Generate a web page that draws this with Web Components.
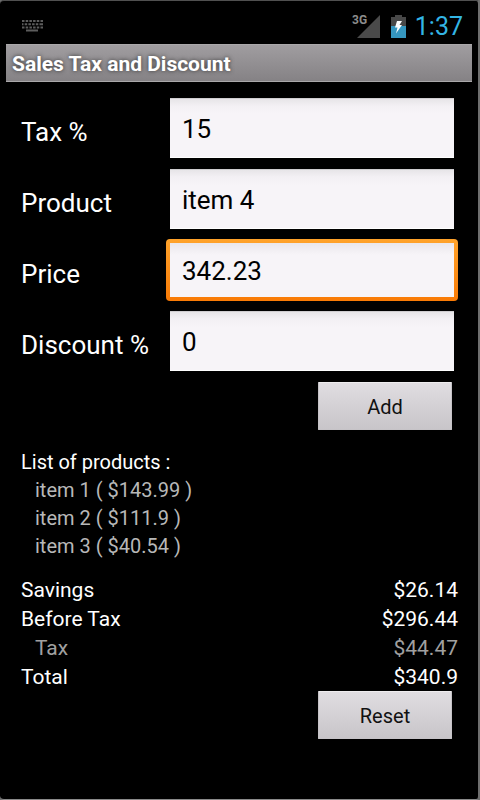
<!DOCTYPE html>
<html lang="en">
<head>
<meta charset="utf-8">
<meta name="viewport" content="width=device-width, initial-scale=1">
<title>Sales Tax and Discount</title>
<style>
  body { margin: 0; background: #6e6e6e; font-family: Roboto, "Liberation Sans", sans-serif; color: #fff; }
</style>
</head>
<body>
<tax-screen></tax-screen>
<script>
const define = (name, markup, setup) => {
  const template = document.createElement('template');
  template.innerHTML = markup;
  customElements.define(name, class extends HTMLElement {
    constructor() {
      super();
      this.attachShadow({ mode: 'open' }).append(template.content.cloneNode(true));
    }
    connectedCallback() { if (setup) setup(this, this.shadowRoot); }
  });
};

define('status-bar', `
  <style>
    :host { display: flex; align-items: center; height: 41px; padding: 0 15px 0 22px; box-sizing: border-box; }
    svg { display: block; flex: none; }
    .signal { margin-left: auto; }
    .battery { margin: 0 9px 0 11px; }
    time { font-size: 25px; line-height: 32px; font-weight: 400; color: #33b5e5; padding-top: 8px; }
    .signal, .battery, .keyboard { margin-top: 6px; }
    text { font: 700 12px Roboto, sans-serif; fill: #8c8c8c; }
  </style>
  <svg class="keyboard" width="21" height="12" viewBox="0 0 21 12" stroke="#5c5c5c" stroke-width="2" fill="none" role="img" aria-label="Keyboard">
    <path d="M0 1H21M0 7.500H21" stroke-dasharray="2.500 1.200"/>
    <path d="M0 4.300H21" stroke-dasharray="1.500 1.200 2.500 1.200 2.500 1.200 2.500 1.200 2.500 1.200 4 1"/>
    <path d="M4 10.500H16"/>
  </svg>
  <svg class="signal" width="29" height="24" viewBox="0 0 29 24" role="img" aria-label="Signal 3G">
    <path d="M29 1V24H6Z" fill="#4a4a4a"/>
    <text x="1" y="10">3G</text>
  </svg>
  <svg class="battery" width="15" height="24" viewBox="0 0 15 24" role="img" aria-label="Battery charging">
    <path d="M0 3H4V1H11V3H15V12H0Z" fill="#484848"/>
    <path d="M0 12H15V24H0Z" fill="#3596bf"/>
    <path d="M6 7H11L8.500 11H11L5 19.500L6.500 13.500H4Z" fill="#fff"/>
  </svg>
  <time>1:37</time>
`);

define('title-bar', `
  <style>
    :host { display: block; padding: 0 6px; margin: 1px 6px 0 6px; height: 38px; box-sizing: border-box;
      background: linear-gradient(#a09da0, #858285); border-top: 1px solid #aaa8aa; border-bottom: 1px solid #aaa8aa; }
    h1 { margin: 0; font-size: 21px; line-height: 38px; font-weight: 700; text-shadow: 0 0 4px #333; }
  </style>
  <h1><slot></slot></h1>
`);

define('form-field', `
  <style>
    :host { display: grid; grid-template: 60px / 149px minmax(0, 1fr); align-items: center; }
    label { font-size: 26px; line-height: 32px; padding-top: 8px; white-space: nowrap; }
    input { box-sizing: border-box; width: 100%; height: 60px; margin: 0; padding: 2px 12px 0; border: 0; border-radius: 0;
      font: 26px/32px Roboto, "Liberation Sans", sans-serif; color: #000; outline: none;
      background: linear-gradient(#e5e3e6, #f3f0f4 8px, #f7f4f8 16px, #f7f4f8);
      box-shadow: inset 0 1px #cfcdd0, inset 0 -1px #fff; }
    :host([active]) input { width: calc(100% + 8px); height: 62px; margin: 0 -4px; border: 4px solid transparent;
      border-radius: 4px; box-shadow: none;
      background: linear-gradient(#eae7eb, #f7f4f8 12px) padding-box, linear-gradient(#ffa32b, #f97a05) border-box; }
  </style>
  <label for="value"></label>
  <input id="value" type="text" autocomplete="off">
`, (host, root) => {
  root.querySelector('label').textContent = host.getAttribute('label');
  root.querySelector('input').value = host.getAttribute('value');
});

define('push-button', `
  <style>
    :host { display: flex; justify-content: flex-end; }
    button { width: 134px; height: 48px; padding: 2px 0 0; border: 1px solid #c6c3c7; border-top-color: #eeecee; border-radius: 1px;
      font: 20px/24px Roboto, "Liberation Sans", sans-serif; color: #111;
      background: linear-gradient(#e0dde1, #c8c5c9); }
  </style>
  <button type="button"><slot></slot></button>
`);

define('product-list', `
  <style>
    :host { display: block; font-size: 20px; line-height: 28px; }
    h2 { margin: 0; font: inherit; }
    ul { margin: 0; padding: 0 0 0 14px; list-style: none; color: #b8b8b8; }
  </style>
  <h2>List of products :</h2>
  <ul><li>item 1 ( $143.99 )</li><li>item 2 ( $111.9 )</li><li>item 3 ( $40.54 )</li></ul>
`);

define('total-row', `
  <style>
    :host { display: flex; justify-content: space-between; font-size: 21px; line-height: 28px; }
    :host([minor]) { color: #a0a0a0; padding-left: 14px; }
  </style>
  <span><slot></slot></span><span><slot name="amount"></slot></span>
`);

define('tax-screen', `
  <style>
    :host { display: block; box-sizing: border-box; min-height: 100vh; padding: 1px 0; border-right: 2px solid #6e6e6e;
      background: #000; border-top: 1px solid #505050; border-bottom: 1px solid #8a8a8a;
      border-radius: 4px; }
    main { display: block; padding: 16px 20px 16px 21px; }
    form { display: grid; gap: 11px; padding-right: 4px; }
    .action { padding-right: 2px; }
    product-list { margin-top: 18px; }
    .totals { display: grid; gap: 1px; margin-top: 16px; }
    .reset { padding-right: 6px; }
  </style>
  <status-bar></status-bar>
  <title-bar>Sales Tax and Discount</title-bar>
  <main>
    <form>
      <form-field label="Tax %" value="15"></form-field>
      <form-field label="Product" value="item 4"></form-field>
      <form-field label="Price" value="342.23" active></form-field>
      <form-field label="Discount %" value="0"></form-field>
      <push-button class="action">Add</push-button>
    </form>
    <product-list></product-list>
    <section class="totals">
      <total-row>Savings<span slot="amount">$26.14</span></total-row>
      <total-row>Before Tax<span slot="amount">$296.44</span></total-row>
      <total-row minor>Tax<span slot="amount">$44.47</span></total-row>
      <total-row>Total<span slot="amount">$340.9</span></total-row>
    </section>
    <push-button class="reset">Reset</push-button>
  </main>
`);
</script>
</body>
</html>
